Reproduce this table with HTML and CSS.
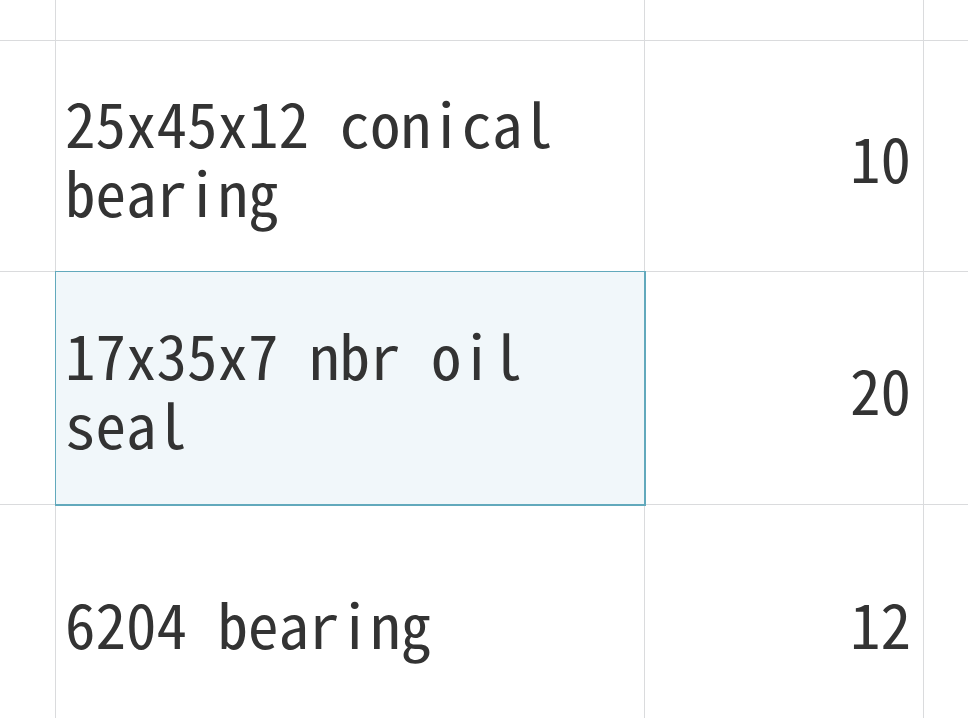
FILE: index.html
```html
<!DOCTYPE html>
<html lang="en">
<head>
<meta charset="utf-8">
<title>Sheet</title>
<link rel="stylesheet" href="styles.css">
</head>
<body>
<div class="sheet">
  <div class="cell"></div>
  <div class="cell"></div>
  <div class="cell"></div>
  <div class="cell last"></div>

  <div class="cell row"></div>
  <div class="cell row text"><span>25x45x12 conical bearing</span></div>
  <div class="cell row num">10</div>
  <div class="cell row last"></div>

  <div class="cell row"></div>
  <div class="cell row text selected"><span>17x35x7 nbr oil seal</span></div>
  <div class="cell row num">20</div>
  <div class="cell row last"></div>

  <div class="cell row"></div>
  <div class="cell row text"><span>6204 bearing</span></div>
  <div class="cell row num">12</div>
  <div class="cell row last"></div>
</div>
</body>
</html>
```
FILE: styles.css
```css
html, body {
  margin: 0;
  padding: 0;
  background: #ffffff;
  overflow: hidden;
}

.sheet {
  display: grid;
  grid-template-columns: 56px 589px 279px 1fr;
  grid-template-rows: 41px 231px 233px 236px;
  font-family: "Noto Sans Mono CJK SC", "Liberation Mono", monospace;
  font-size: 61px;
  line-height: 69px;
  color: #333333;
}

.cell {
  border-right: 1px solid #dadbdd;
  border-bottom: 1px solid #dadbdd;
  display: flex;
  align-items: center;
  min-width: 0;
}

.cell.last {
  border-right: none;
}

.text {
  padding: 0 8px 0 9px;
}

.num {
  justify-content: flex-end;
  padding-right: 12px;
}

.selected {
  background: #f1f7fa;
  border-right-color: #62a9bc;
  border-bottom-color: #62a9bc;
  outline: 1px solid #62a9bc;
  position: relative;
  z-index: 1;
}
```
